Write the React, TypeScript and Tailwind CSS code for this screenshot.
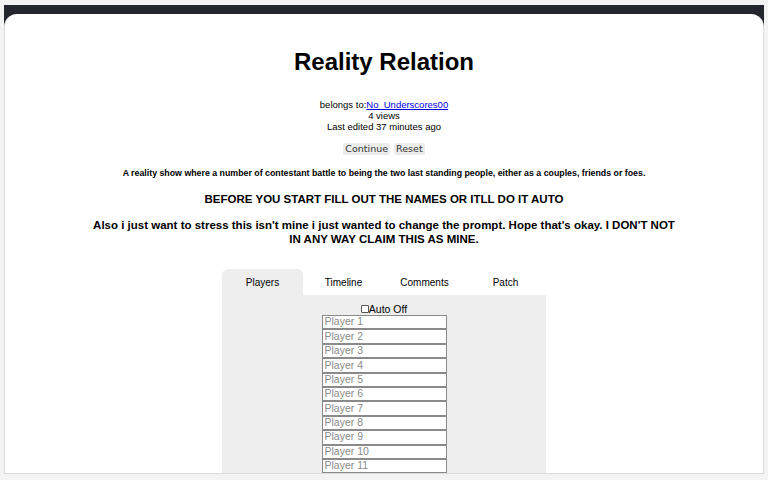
import React from "react";

const tabs = ["Players", "Timeline", "Comments", "Patch"];
const players = Array.from({ length: 11 }, (_, i) => `Player ${i + 1}`);

export default function App() {
  return (
    <div className="w-[768px] h-[480px] overflow-hidden bg-[#f3f3f3] pt-[5px] px-[4px] font-['Liberation_Sans',Arial,sans-serif] text-black">
      {/* dark frame strip behind the rounded card */}
      <div className="h-[469px] bg-[#23262d] pt-[9px]">
        <div className="h-full bg-white rounded-t-[13px] border-x border-b border-[#dcdcdc] overflow-hidden flex flex-col items-center">
          <h1 className="mt-[34px] text-[24px] leading-[28px] font-bold">Reality Relation</h1>

          <div className="mt-[23px] text-[9.5px] leading-[11px] text-center">
            <div>
              belongs to:
              <a href="#" className="text-[#0000ee] underline">No_Underscores00</a>
            </div>
            <div>4 views</div>
            <div>Last edited 37 minutes ago</div>
          </div>

          <div className="mt-[11px] flex gap-[4px] font-['DejaVu_Sans',sans-serif] text-[9.5px] leading-[12px] text-[#333]">
            <button className="bg-[#ececec] rounded-[2px] px-[2px] h-[12px]">Continue</button>
            <button className="bg-[#ececec] rounded-[2px] px-[2px] h-[12px]">Reset</button>
          </div>

          <p className="mt-[13px] text-[8.8px] leading-[11px] font-bold text-center">
            A reality show where a number of contestant battle to being the two last standing people, either as a couples, friends or foes.
          </p>

          <p className="mt-[13px] text-[11.5px] leading-[14px] font-bold text-center">
            BEFORE YOU START FILL OUT THE NAMES OR ITLL DO IT AUTO
          </p>

          <p className="mt-[12px] w-[590px] text-[11.5px] leading-[14px] font-bold text-center">
            Also i just want to stress this isn't mine i just wanted to change the prompt. Hope that's okay. I DON'T NOT IN ANY WAY CLAIM THIS AS MINE.
          </p>

          {/* tabbed panel */}
          <div className="mt-[23px] w-[324px] flex-1 flex flex-col">
            <div className="flex h-[26px]">
              {tabs.map((t, i) => (
                <div
                  key={t}
                  className={`w-[81px] flex items-center justify-center text-[10px] rounded-t-[6px] ${i === 0 ? "bg-[#eeeeee]" : ""}`}
                >
                  {t}
                </div>
              ))}
            </div>
            <div className="flex-1 bg-[#eeeeee] flex flex-col items-center pt-[8px]">
              <label className="flex items-center text-[10.5px] leading-[12px]">
                <span className="w-[8px] h-[8px] border border-[#555] bg-white rounded-[1px]" />
                Auto Off
              </label>
              <div className="flex flex-col">
                {players.map((p) => (
                  <input
                    key={p}
                    placeholder={p}
                    className="w-[125px] h-[14.4px] bg-white border border-[#8a8a8a] px-[2px] text-[10.5px] placeholder:text-[#8a8a8a] outline-none"
                  />
                ))}
              </div>
            </div>
          </div>
        </div>
      </div>
    </div>
  );
}
